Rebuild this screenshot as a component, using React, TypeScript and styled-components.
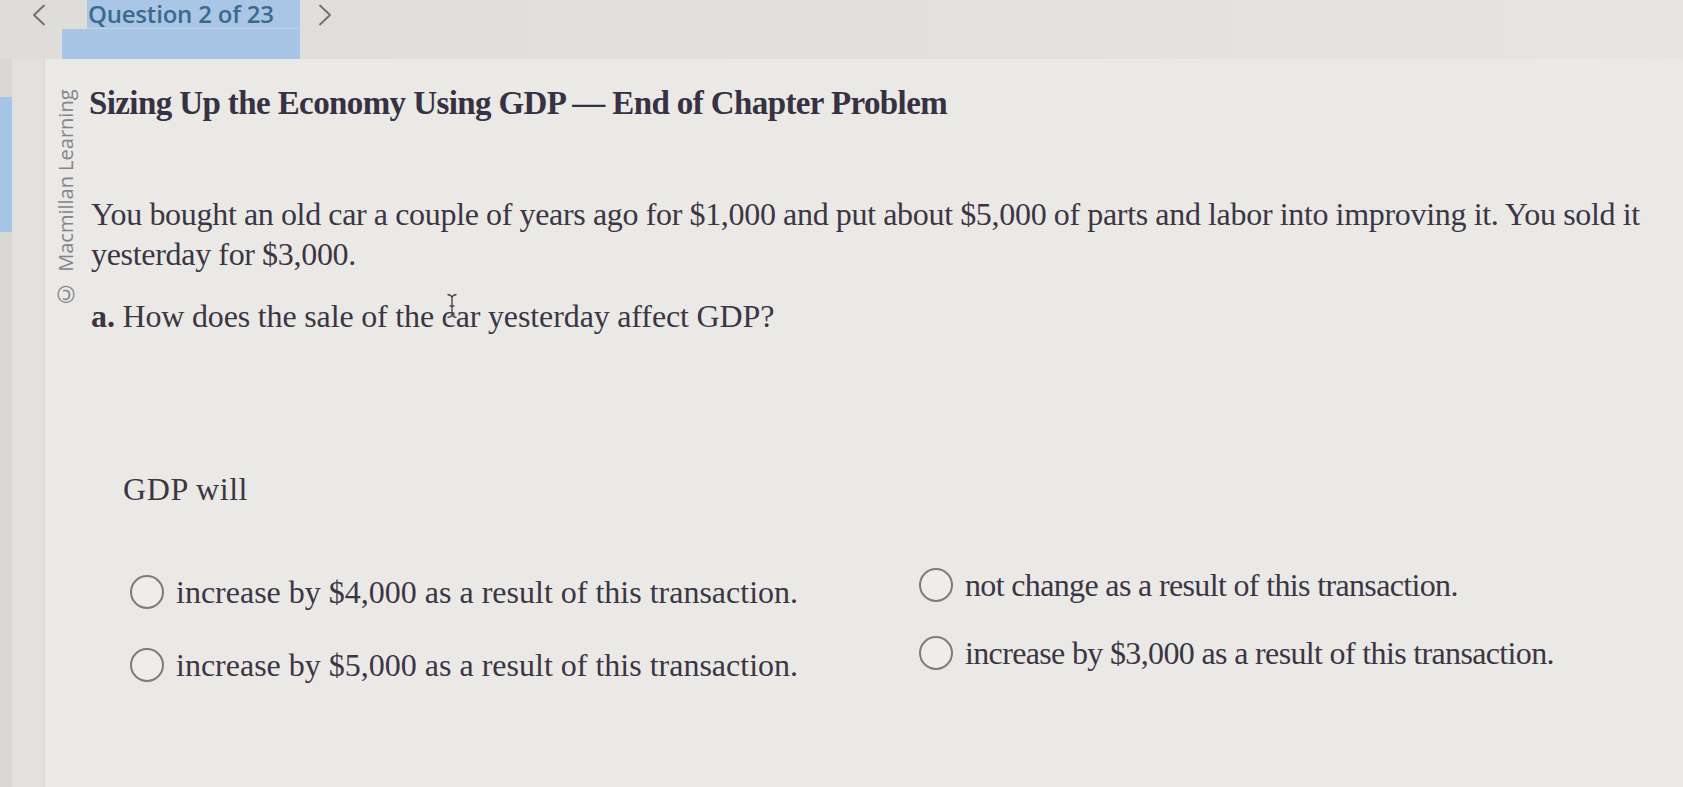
import React from "react";
import styled, { createGlobalStyle } from "styled-components";

const Global = createGlobalStyle`
  html, body { margin: 0; padding: 0; }
  body { background: #e1dfdb; overflow: hidden; }
  * { box-sizing: border-box; }
`;

const Page = styled.div`
  position: relative;
  width: 1683px;
  height: 787px;
  display: flex;
  flex-direction: column;
  background: linear-gradient(90deg, #dfddd9 0%, #e3e1dd 60%, #e6e5e1 100%);
`;

const TopBar = styled.header`
  height: 59px;
  flex: 0 0 59px;
  display: flex;
  align-items: flex-start;
  padding-left: 28px;
`;

const NavArrow = styled.button<{ $gap: number }>`
  margin-left: ${(p) => p.$gap}px;
  margin-top: 3px;
  width: 22px;
  height: 24px;
  padding: 0;
  border: none;
  background: transparent;
  color: #6f6d73;
  display: flex;
  align-items: center;
  justify-content: center;
`;

const Tab = styled.div`
  margin-left: 12px;
  width: 238px;
  height: 59px;
  display: flex;
  flex-direction: column;
`;

const TabLabel = styled.div`
  margin-left: 25px;
  height: 29px;
  background: #a9c6e7;
  border-bottom: 1px solid #b9d2ee;
  color: #3b6a8d;
  font-family: "Open Sans", "Noto Sans", sans-serif;
  font-weight: 600;
  font-size: 24px;
  line-height: 28px;
  letter-spacing: -0.2px;
  padding-left: 1px;
  white-space: nowrap;
`;

const TabFill = styled.div`
  flex: 1;
  background: #a8c5e6;
`;

const Body = styled.div`
  flex: 1;
  display: flex;
`;

const Gutter = styled.div`
  width: 45px;
  flex: 0 0 45px;
  display: flex;
  background: #e3e1dd;
  border-right: 1px solid #d8d6d2;
`;

const GutterRail = styled.div`
  width: 12px;
  background: #dad8d4;
  padding-top: 38px;
`;

const RailMarker = styled.div`
  height: 135px;
  background: #a6c4e6;
`;

const Panel = styled.main`
  flex: 1;
  display: flex;
  background: #ebe9e5;
  padding-left: 10px;
  padding-top: 30px;
`;

const Credit = styled.div`
  writing-mode: vertical-rl;
  transform: rotate(180deg);
  height: 222px;
  width: 22px;
  font-family: "Open Sans", "Noto Sans", sans-serif;
  font-size: 20px;
  line-height: 22px;
  color: #86838c;
  white-space: nowrap;
  text-align: left;
`;

const CopyMark = styled.span`
  font-size: 23px;
  margin-bottom: 2px;
`;

const Content = styled.section`
  margin-left: 12px;
  margin-top: -4px;
  display: flex;
  flex-direction: column;
  font-family: "Liberation Serif", "Times New Roman", serif;
  color: #3b3646;
`;

const Title = styled.h1`
  margin: 0;
  font-size: 33px;
  line-height: 36px;
  font-weight: 700;
  letter-spacing: -0.6px;
  color: #363143;
  white-space: nowrap;
`;

const Paragraph = styled.p<{ $top: number; $indent?: number; $spacing?: number }>`
  margin: ${(p) => p.$top}px 0 0 ${(p) => p.$indent ?? 2}px;
  width: 1575px;
  font-size: 32px;
  line-height: 40px;
  letter-spacing: ${(p) => p.$spacing ?? -0.3}px;
  word-spacing: -0.3px;
`;

const Bold = styled.strong`
  font-weight: 700;
`;

const Choices = styled.div`
  margin-top: 63px;
  margin-left: 41px;
  display: grid;
  grid-template-columns: 789px 1fr;
  row-gap: 33px;
`;

const Choice = styled.label<{ $lift: number; $spacing: number }>`
  display: flex;
  align-items: center;
  gap: 12px;
  height: 40px;
  transform: translateY(${(p) => -p.$lift}px);
  font-size: 32px;
  letter-spacing: ${(p) => p.$spacing}px;
  white-space: nowrap;
  cursor: pointer;
`;

const Radio = styled.span`
  width: 34px;
  height: 34px;
  flex: 0 0 34px;
  border-radius: 50%;
  border: 2.5px solid #7d7a80;
  background: #efede9;
`;

const CursorMark = styled.svg`
  position: absolute;
  left: 445px;
  top: 293px;
`;

const Chevron = ({ dir }: { dir: "left" | "right" }) => (
  <svg width="16" height="22" viewBox="0 0 16 22" fill="none">
    <path
      d={dir === "left" ? "M13 1.5 L3 11 L13 20.5" : "M3 1.5 L13 11 L3 20.5"}
      stroke="currentColor"
      strokeWidth="1.8"
      strokeLinecap="round"
      strokeLinejoin="round"
    />
  </svg>
);

const options = [
  { text: "increase by $4,000 as a result of this transaction.", lift: 0, spacing: 0 },
  { text: "not change as a result of this transaction.", lift: 7, spacing: -0.65 },
  { text: "increase by $5,000 as a result of this transaction.", lift: 0, spacing: 0 },
  { text: "increase by $3,000 as a result of this transaction.", lift: 12, spacing: -0.65 },
];

export default function App() {
  return (
    <Page>
      <Global />
      <TopBar>
        <NavArrow $gap={0} aria-label="Previous question">
          <Chevron dir="left" />
        </NavArrow>
        <Tab>
          <TabLabel>Question 2 of 23</TabLabel>
          <TabFill />
        </Tab>
        <NavArrow $gap={14} aria-label="Next question">
          <Chevron dir="right" />
        </NavArrow>
      </TopBar>
      <Body>
        <Gutter>
          <GutterRail>
            <RailMarker />
          </GutterRail>
        </Gutter>
        <Panel>
          <Credit>
            <CopyMark>©</CopyMark> Macmillan Learning
          </Credit>
          <Content>
            <Title>Sizing Up the Economy Using GDP — End of Chapter Problem</Title>
            <Paragraph $top={73}>
              You bought an old car a couple of years ago for $1,000 and put about $5,000 of parts and labor into
              improving it. You sold it yesterday for $3,000.
            </Paragraph>
            <Paragraph $top={22} $spacing={-0.1}>
              <Bold>a.</Bold> How does the sale of the car yesterday affect GDP?
            </Paragraph>
            <Paragraph $top={133} $indent={34} $spacing={0.6}>
              GDP will
            </Paragraph>
            <Choices>
              {options.map((o) => (
                <Choice key={o.text} $lift={o.lift} $spacing={o.spacing}>
                  <Radio />
                  {o.text}
                </Choice>
              ))}
            </Choices>
          </Content>
        </Panel>
      </Body>
      <CursorMark width="14" height="26" viewBox="0 0 14 26" fill="none">
        <path
          d="M2.5 1.5 Q7 2.2 7 5 L7 21 Q7 23.8 2.5 24.5 M11.5 1.5 Q7 2.2 7 5 M7 21 Q7 23.8 11.5 24.5 M4.5 13 L9.5 13"
          stroke="#4a4650"
          strokeWidth="1.4"
        />
      </CursorMark>
    </Page>
  );
}
